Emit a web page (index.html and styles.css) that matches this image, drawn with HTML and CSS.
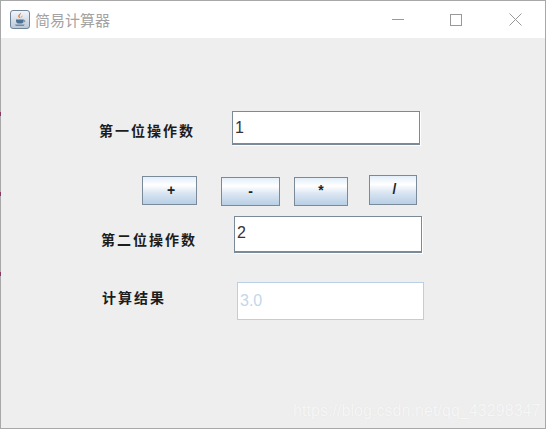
FILE: index.html
```html
<!DOCTYPE html>
<html lang="zh-CN">
<head>
  <meta charset="utf-8" />
  <title>简易计算器</title>
  <link rel="stylesheet" href="styles.css">
</head>
<body>
  <div class="window">
    <header class="titlebar">
      <span class="app-icon">
        <svg width="22" height="20" viewBox="0 0 22 20" aria-hidden="true">
          <defs>
            <linearGradient id="tile" x1="0" y1="0" x2="0" y2="1">
              <stop offset="0" stop-color="#f4f7fa" />
              <stop offset="1" stop-color="#b9c8d8" />
            </linearGradient>
          </defs>
          <rect x="0.5" y="0.5" width="19" height="18" rx="2.5" fill="url(#tile)" stroke="#6f8497" />
          <path d="M10.5 2.5c1.4 1.6-1.6 2.6-.8 4.2.3.6.8 1 .8 1.6-1.6-.6-2.6-1.5-2.2-2.8.4-1.2 2.2-1.6 2.2-3z" fill="#e2762a" />
          <path d="M12.4 5.4c.3 1.1-.9 1.6-.7 2.6-.7-.8-.2-1.9.7-2.6z" fill="#e2762a" />
          <path d="M6 9.6h7.6v.9c0 1.8-1 3-2.2 3H8.2C7 13.500 6 12.300 6 10.500z" fill="#50708f" />
          <path d="M13.500 10.200c1.500-.3 2 1.400.2 2.100" fill="none" stroke="#50708f" stroke-width=".8" />
          <path d="M4.800 14.600h10l-1.200 1.300H6z" fill="#6d8aa6" />
        </svg>
      </span>
      <span class="app-title">简易计算器</span>
      <div class="win-controls">
        <svg class="win-min" width="12" height="12" viewBox="0 0 12 12" aria-hidden="true"><path d="M0 5.500h12" stroke="#999" /></svg>
        <svg class="win-max" width="12" height="12" viewBox="0 0 12 12" aria-hidden="true"><rect x=".5" y=".5" width="11" height="11" fill="none" stroke="#999" /></svg>
        <svg class="win-close" width="13" height="13" viewBox="0 0 13 13" aria-hidden="true"><path d="M.5 .5l12 12M12.500 .5l-12 12" stroke="#999" /></svg>
      </div>
    </header>

    <main class="content">
      <div class="row row-first">
        <label class="field-label" for="first">第一位操作数</label>
        <input class="field" id="first" type="text" value="1" />
      </div>

      <div class="ops">
        <button class="op op-add" type="button">+</button>
        <button class="op op-sub" type="button">-</button>
        <button class="op op-mul" type="button">*</button>
        <button class="op op-div" type="button">/</button>
      </div>

      <div class="row row-second">
        <label class="field-label" for="second">第二位操作数</label>
        <input class="field" id="second" type="text" value="2" />
      </div>

      <div class="row row-result">
        <label class="field-label" for="result">计算结果</label>
        <input class="field field-off" id="result" type="text" value="3.0" disabled />
      </div>
    </main>

    <span class="tick tick-a"></span>
    <span class="tick tick-b"></span>
    <span class="tick tick-c"></span>
    <span class="watermark">https://blog.csdn.net/qq_43298347</span>
  </div>
</body>
</html>
```

FILE: styles.css
```css
* { box-sizing: border-box; }
html, body {
  height: 100%;
  margin: 0;
  background: #eeeeee;
}
.window {
  position: relative;
  width: 546px;
  height: 429px;
  display: flex;
  flex-direction: column;
  border: 1px solid #a8a8a8;
  background: #eeeeee;
  font-family: "Noto Sans CJK SC", "Liberation Sans", sans-serif;
}

/* title bar */
.titlebar {
  height: 37px;
  flex: none;
  display: flex;
  align-items: center;
  padding: 0 0 0 9px;
  background: #ffffff;
}
.app-icon { display: flex; width: 25px; }
.app-title {
  font-size: 15px;
  color: #a3a3a3;
}
.win-controls {
  margin-left: auto;
  display: flex;
  align-items: center;
  padding-right: 23px;
}
.win-min { margin-right: 46px; }
.win-max { margin-right: 47px; }

/* form */
.content {
  flex: 1;
  display: flex;
  flex-direction: column;
}
.row { display: flex; align-items: center; }
.row-first { margin-top: 73px; padding-left: 98px; }
.row-second { margin-top: 10px; padding-left: 100px; }
.row-result { margin-top: 29px; padding-left: 101px; }

.field-label {
  font-size: 14px;
  font-weight: 700;
  letter-spacing: 2px;
  color: #1c1c1c;
  white-space: nowrap;
}
.row-first .field-label { width: 133px; margin-top: 4px; }
.row-second .field-label { width: 133px; margin-top: 8px; }
.row-result .field-label { width: 135px; margin-top: -8px; }

.field {
  width: 188px;
  height: 34px;
  padding: 0 0 0 2px;
  border: 1px solid #7a8a99;
  border-bottom-width: 2px;
  outline: none;
  border-radius: 0;
  background: #ffffff;
  box-shadow: 1px 1px 0 #ffffff;
  color: #333333;
  font-family: "Liberation Sans", sans-serif;
  font-size: 16px;
}
.row-second .field { height: 37px; padding-bottom: 3px; }
.field-off {
  width: 187px;
  height: 38px;
  padding: 0 0 0 2px;
  border: 1px solid #b8cfe5;
  box-shadow: none;
  color: #c4d7ea;
  -webkit-text-fill-color: #c4d7ea;
  opacity: 1;
}

.ops {
  display: flex;
  align-items: flex-start;
  margin-top: 31px;
  padding-left: 141px;
}
.op {
  height: 29px;
  padding: 0 0 2px;
  border: 1px solid #7a8a99;
  border-radius: 0;
  background: linear-gradient(180deg, #e3eefa 0%, #ffffff 30%, #d9e5f2 60%, #b8cfe5 100%);
  color: #222222;
  font-family: "Liberation Sans", sans-serif;
  font-size: 14px;
  font-weight: 700;
}
.op-add { width: 55px; padding-left: 3px; }
.op-sub { width: 59px; margin: 1px 0 0 24px; }
.op-mul { width: 54px; margin: 1px 0 0 14px; padding-bottom: 4px; }
.op-div { width: 48px; height: 30px; margin: -1px 0 0 21px; padding-left: 3px; }

/* leftovers from the captured desktop */
.tick {
  position: absolute;
  left: -1px;
  width: 1px;
  height: 4px;
  background: #8a3a5e;
}
.tick-a { top: 111px; }
.tick-b { top: 191px; }
.tick-c { top: 271px; }
.watermark {
  position: absolute;
  left: 292px;
  top: 401px;
  font-family: "Liberation Sans", sans-serif;
  font-size: 16px;
  letter-spacing: 0.06px;
  color: #f6f6f6;
  text-shadow: 0 0 1px #e0e0e0;
  white-space: nowrap;
}
```
